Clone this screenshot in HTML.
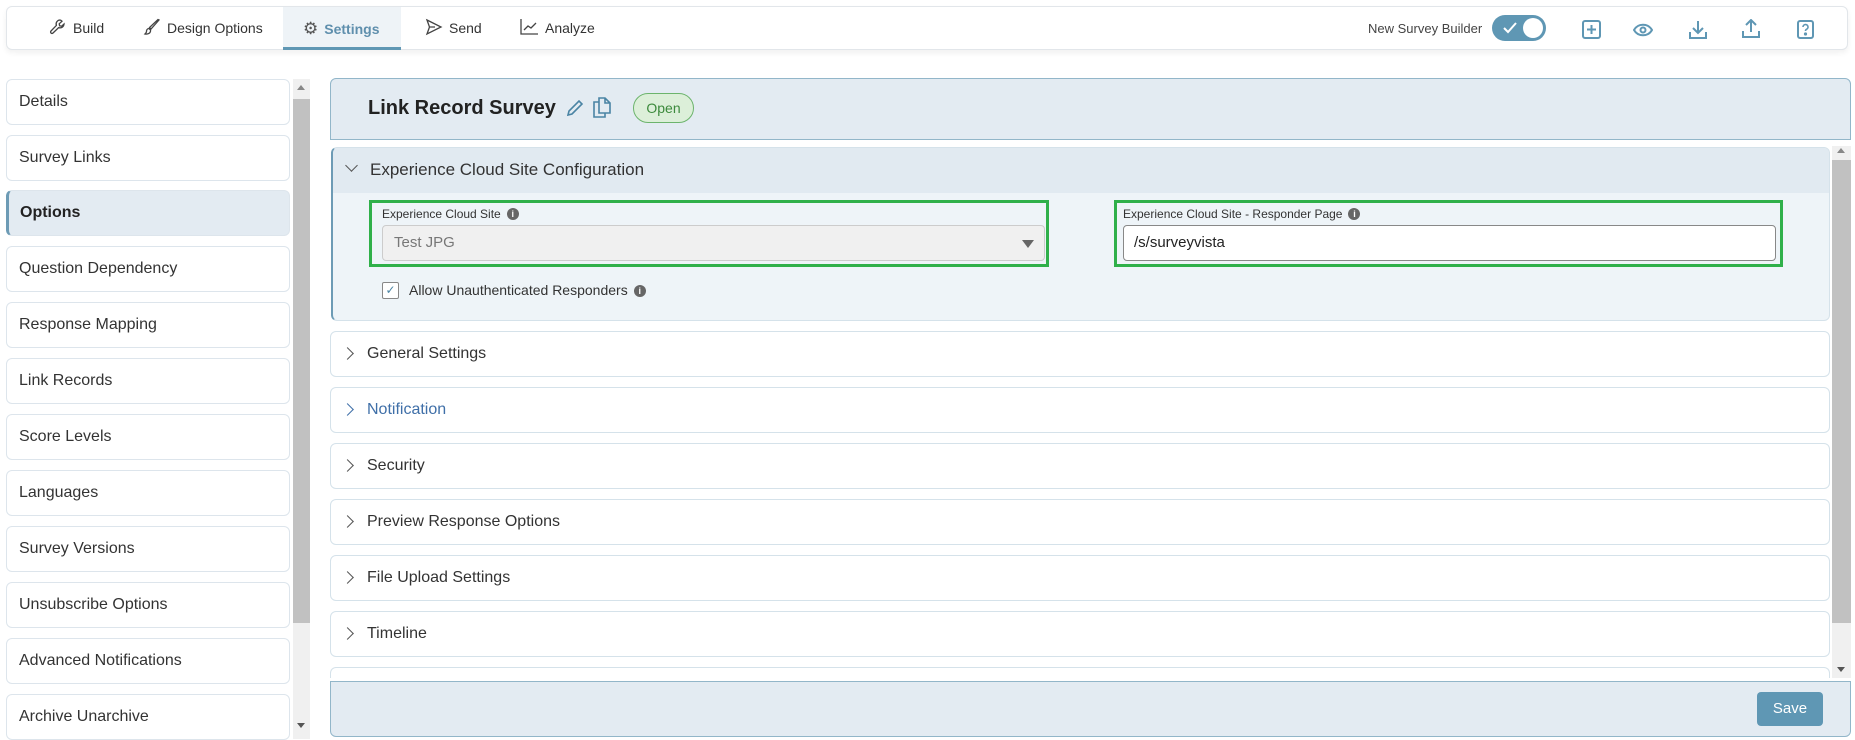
<!DOCTYPE html>
<html><head><meta charset="utf-8"><style>
*{box-sizing:border-box;margin:0;padding:0}
body{width:1855px;height:739px;overflow:hidden;background:#fff;font-family:"Liberation Sans",sans-serif;color:#222;position:relative}
.a{position:absolute}
.nav{left:6px;top:6px;width:1842px;height:44px;border:1px solid #e2e6ea;border-radius:6px;box-shadow:0 3px 6px rgba(0,0,0,.06);background:#fff}
.tab{position:absolute;top:0;height:43px;line-height:43px;font-size:14px;color:#333}
.side{left:6px;width:284px;height:46px;border:1px solid #dde5ec;border-radius:6px;background:#fff;font-size:16px;line-height:44px;padding-left:12px;color:#333}
.item{left:330px;width:1500px;height:46px;border:1px solid #d5e2ea;border-radius:6px;background:#fff;font-size:16px;line-height:44px;padding-left:36px;color:#333}
.chev{position:absolute;left:12px;top:17px;width:9px;height:9px;border-right:1.6px solid #555;border-bottom:1.6px solid #555;transform:rotate(-45deg)}
.info{display:inline-block;width:12px;height:12px;border-radius:50%;background:#666;color:#fff;font-size:9px;line-height:12px;text-align:center;font-weight:bold;vertical-align:1px;margin-left:6px}
</style></head><body>
<div class="a nav">
 <div class="tab" style="left:42px"><svg width="18" height="18" viewBox="0 0 18 18" style="vertical-align:-3px;margin-right:6px" fill="none" stroke="#444" stroke-width="1.3"><path d="M11 2a4 4 0 0 0-3.6 5.4L2 13a1.4 1.4 0 0 0 2 2l5.6-5.4A4 4 0 0 0 15 6l-2.4 2.2-2-.4-.4-2L13 3.2A4 4 0 0 0 11 2z"/></svg>Build</div>
 <div class="tab" style="left:136px"><svg width="18" height="18" viewBox="0 0 18 18" style="vertical-align:-3px;margin-right:6px" fill="none" stroke="#444" stroke-width="1.3"><path d="M16 2L8 11l-1.5-1.5L15 1.5zM6 10.5c-2 0-2.5 2-2.5 3S2 16 2 16c3 .5 6-1 5.5-4z"/></svg>Design Options</div>
 <div class="tab" style="left:276px;width:118px;background:#eef3f7;border-bottom:3px solid #5f97b4;padding-left:20px;color:#5f8fad;font-weight:bold"><span style="font-size:17px;color:#555;font-weight:normal;margin-right:6px">⚙</span>Settings</div>
 <div class="tab" style="left:418px"><svg width="18" height="18" viewBox="0 0 18 18" style="vertical-align:-3px;margin-right:6px" fill="none" stroke="#444" stroke-width="1.3"><path d="M2 2l14 7-14 7 2.5-7zM4.5 9H10"/></svg>Send</div>
 <div class="tab" style="left:512px"><svg width="20" height="18" viewBox="0 0 20 18" style="vertical-align:-3px;margin-right:6px" fill="none" stroke="#444" stroke-width="1.3"><path d="M2 1v15h17M5 12l4-4 3 2 5-5"/></svg>Analyze</div>
 <div class="tab" style="left:1361px;font-size:13px;color:#444">New Survey Builder</div>
 <div class="a" style="left:1485px;top:8px;width:54px;height:26px;border-radius:13px;background:#5f97b4"><svg class="a" style="left:11px;top:7px" width="14" height="12" viewBox="0 0 14 12" fill="none" stroke="#fff" stroke-width="2"><path d="M1 6l4 4 8-9"/></svg><div class="a" style="right:3px;top:3px;width:20px;height:20px;border-radius:50%;background:#fff"></div></div>
 <svg class="a" style="left:1575px;top:13px" width="19" height="19" viewBox="0 0 19 19" fill="none" stroke="#5f97b4" stroke-width="2"><rect x="1" y="1" width="17" height="17" rx="2"/><path d="M9.5 5v9M5 9.5h9"/></svg>
 <svg class="a" style="left:1626px;top:16px" width="20" height="14" viewBox="0 0 20 14" fill="none" stroke="#5f97b4" stroke-width="2"><path d="M1 7c4-7 14-7 18 0-4 7-14 7-18 0z"/><circle cx="10" cy="7" r="2.5"/></svg>
 <svg class="a" style="left:1682px;top:13px" width="18" height="19" viewBox="0 0 18 19" fill="none" stroke="#5f97b4" stroke-width="2"><path d="M9 1v11M4 8l5 5 5-5M1 12v6h16v-6"/></svg>
 <svg class="a" style="left:1735px;top:12px" width="18" height="19" viewBox="0 0 18 19" fill="none" stroke="#5f97b4" stroke-width="2"><path d="M9 13V2M4 6l5-5 5 5M1 12v6h16v-6"/></svg>
 <svg class="a" style="left:1790px;top:13px" width="17" height="19" viewBox="0 0 17 19" fill="none" stroke="#5f97b4" stroke-width="2"><rect x="1" y="1" width="15" height="17" rx="2"/><path d="M6 7a2.5 2.5 0 1 1 3.5 2.3c-.8.4-1 .9-1 1.7" stroke-width="1.6"/><circle cx="8.5" cy="14" r=".6" fill="#5f97b4"/></svg>
</div>

<div class="a side" style="top:79px">Details</div>
<div class="a side" style="top:135px">Survey Links</div>
<div class="a side" style="top:190px;background:#e3ebf2;border-left:3px solid #6d9bb5;font-weight:600;color:#222;padding-left:11px">Options</div>
<div class="a side" style="top:246px">Question Dependency</div>
<div class="a side" style="top:302px">Response Mapping</div>
<div class="a side" style="top:358px">Link Records</div>
<div class="a side" style="top:414px">Score Levels</div>
<div class="a side" style="top:470px">Languages</div>
<div class="a side" style="top:526px">Survey Versions</div>
<div class="a side" style="top:582px">Unsubscribe Options</div>
<div class="a side" style="top:638px">Advanced Notifications</div>
<div class="a side" style="top:694px">Archive Unarchive</div>
<div class="a" style="left:293px;top:79px;width:17px;height:660px;background:#f0f0f0"></div>
<div class="a" style="left:293px;top:99px;width:17px;height:524px;background:#c1c1c1"></div>
<div class="a" style="left:297px;top:85px;border:4px solid transparent;border-bottom:5px solid #888;border-top:0"></div>
<div class="a" style="left:297px;top:723px;border:4px solid transparent;border-top:5px solid #555;border-bottom:0"></div>

<div class="a" style="left:330px;top:78px;width:1521px;height:62px;background:#e3ebf2;border:1px solid #92b6c9;border-radius:6px 6px 0 0"></div>
<div class="a" style="left:368px;top:97px;font-size:20px;font-weight:bold;color:#222">Link Record Survey</div>
<svg class="a" style="left:566px;top:99px" width="18" height="18" viewBox="0 0 18 18" fill="none" stroke="#4a84a4" stroke-width="1.6"><path d="M2 16l1-4L13 2l3 3L6 15z"/></svg>
<svg class="a" style="left:592px;top:97px" width="20" height="21" viewBox="0 0 20 21" fill="none" stroke="#4a84a4" stroke-width="1.6"><path d="M7 1h6l5 5v10H7z M13 1v5h5 M7 5H2v15h11v-4"/></svg>
<div class="a" style="left:633px;top:93px;width:61px;height:30px;border:1px solid #6cb46c;border-radius:15px;background:#dcefd9;color:#3c8a3c;font-size:14px;text-align:center;line-height:28px">Open</div>

<div class="a" style="left:1832px;top:146px;width:19px;height:532px;background:#f0f0f0"></div>
<div class="a" style="left:1832px;top:160px;width:19px;height:463px;background:#c1c1c1"></div>
<div class="a" style="left:1837px;top:148px;border:4px solid transparent;border-bottom:5px solid #888;border-top:0"></div>
<div class="a" style="left:1837px;top:667px;border:4px solid transparent;border-top:5px solid #555;border-bottom:0"></div>

<div class="a" style="left:331px;top:147px;width:1499px;height:174px;background:#eef4f8;border:1px solid #d5e2ea;border-left:2px solid #6d9bb5;border-radius:6px;overflow:hidden">
 <div style="height:45px;background:#e1eaf1;font-size:17px;line-height:44px;padding-left:37px;color:#333;position:relative"><span class="a" style="left:14px;top:13px;width:9px;height:9px;border-right:1.6px solid #555;border-bottom:1.6px solid #555;transform:rotate(45deg)"></span>Experience Cloud Site Configuration</div>
</div>
<div class="a" style="left:369px;top:200px;width:680px;height:67px;border:3px solid #2fb04a"></div>
<div class="a" style="left:382px;top:207px;font-size:12px;color:#333">Experience Cloud Site<span class="info">i</span></div>
<div class="a" style="left:382px;top:225px;width:663px;height:36px;background:#f0f0f0;border:1px solid #ccc;border-radius:4px;font-size:15px;color:#777;line-height:34px;padding-left:11px">Test JPG<span class="a" style="right:10px;top:14px;border:6px solid transparent;border-top:8px solid #666;border-bottom:0"></span></div>
<div class="a" style="left:1114px;top:200px;width:669px;height:67px;border:3px solid #2fb04a"></div>
<div class="a" style="left:1123px;top:207px;font-size:12px;color:#333">Experience Cloud Site - Responder Page<span class="info">i</span></div>
<div class="a" style="left:1123px;top:225px;width:653px;height:36px;background:#fff;border:1px solid #888;border-radius:4px;font-size:15px;color:#222;line-height:34px;padding-left:10px">/s/surveyvista</div>
<div class="a" style="left:382px;top:282px;width:17px;height:17px;border:1px solid #888;border-radius:2px;background:#fff;color:#4a84a4;font-size:12px;text-align:center;line-height:15px">✓</div>
<div class="a" style="left:409px;top:282px;font-size:14px;color:#333">Allow Unauthenticated Responders<span class="info">i</span></div>

<div class="a item" style="top:331px"><span class="chev"></span>General Settings</div>
<div class="a item" style="top:387px;color:#3f6fa8"><span class="chev" style="border-color:#3f6fa8"></span>Notification</div>
<div class="a item" style="top:443px"><span class="chev"></span>Security</div>
<div class="a item" style="top:499px"><span class="chev"></span>Preview Response Options</div>
<div class="a item" style="top:555px"><span class="chev"></span>File Upload Settings</div>
<div class="a item" style="top:611px"><span class="chev"></span>Timeline</div>
<div class="a item" style="top:667px;height:11px;border-bottom:none;border-radius:6px 6px 0 0"></div>

<div class="a" style="left:330px;top:681px;width:1521px;height:56px;background:#e3ebf2;border:1px solid #92b6c9;border-radius:0 0 6px 6px"></div>
<div class="a" style="left:1757px;top:692px;width:66px;height:34px;background:#5f97b4;border-radius:4px;color:#fff;font-size:15px;text-align:center;line-height:34px">Save</div>
</body></html>
